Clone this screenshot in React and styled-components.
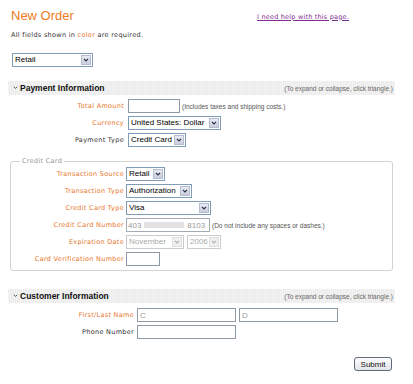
import React from "react";
import styled, { createGlobalStyle } from "styled-components";

const GlobalStyle = createGlobalStyle`
  html, body {
    margin: 0;
    padding: 0;
    background: #fff;
  }
  body {
    font-family: "DejaVu Sans", Verdana, sans-serif;
    font-size: 6.5px;
    color: #333;
  }
`;

function Chevron({ color = "#333", size = 7 }) {
  return (
    <svg width={size} height={size * 0.7} viewBox="0 0 7 5">
      <polyline
        points="1,1 3.5,3.5 6,1"
        fill="none"
        stroke={color}
        strokeWidth="1.4"
      />
    </svg>
  );
}

function Select({ value, width, disabled }) {
  return (
    <SelectBox $w={width} $disabled={disabled}>
      <SelectValue>{value}</SelectValue>
      <SelectArrow $disabled={disabled}>
        <Chevron color={disabled ? "#b0b0b0" : "#2a2f45"} size={6} />
      </SelectArrow>
    </SelectBox>
  );
}

function SectionBar({ title, top }) {
  return (
    <Bar $top={top}>
      <BarToggle>
        <Chevron color="#555" size={5} />
      </BarToggle>
      <BarTitle>{title}</BarTitle>
      <BarHint>(To expand or collapse, click triangle.)</BarHint>
    </Bar>
  );
}

function App() {
  return (
    <Page>
      <GlobalStyle />
      <TopRow>
        <Title>New Order</Title>
        <HelpLink href="#">I need help with this page.</HelpLink>
      </TopRow>
      <Note>
        All fields shown in <Req>color</Req> are required.
      </Note>
      <TopSelect>
        <Select value="Retail" width={81} />
      </TopSelect>

      <SectionBar title="Payment Information" top={14} />
      <Rows $top={4}>
        <Row>
          <Label $w={116} $gap={4} $req>Total Amount</Label>
          <Input $w={52} />
          <Hint>(Includes taxes and shipping costs.)</Hint>
        </Row>
        <Row>
          <Label $w={116} $gap={4} $req>Currency</Label>
          <Select value="United States: Dollar" width={93} />
        </Row>
        <Row>
          <Label $w={116} $gap={4}>Payment Type</Label>
          <Select value="Credit Card" width={58} />
        </Row>
      </Rows>

      <CardSet>
        <Legend>Credit Card</Legend>
        <Rows $top={2}>
          <Row>
            <Label $w={113} $gap={2} $req>Transaction Source</Label>
            <Select value="Retail" width={39} />
          </Row>
          <Row>
            <Label $w={113} $gap={2} $req>Transaction Type</Label>
            <Select value="Authorization" width={66} />
          </Row>
          <Row>
            <Label $w={113} $gap={2} $req>Credit Card Type</Label>
            <Select value="Visa" width={85} />
          </Row>
          <Row>
            <Label $w={113} $gap={2} $req>Credit Card Number</Label>
            <MaskedInput $w={84}>
              <span>403</span>
              <Mask />
              <span>8103</span>
            </MaskedInput>
            <Hint>(Do not include any spaces or dashes.)</Hint>
          </Row>
          <Row>
            <Label $w={113} $gap={2} $req>Expiration Date</Label>
            <Select value="November" width={58} disabled />
            <Spacer />
            <Select value="2006" width={34} disabled />
          </Row>
          <Row>
            <Label $w={113} $gap={2} $req>Card Verification Number</Label>
            <Input $w={34} />
          </Row>
        </Rows>
      </CardSet>

      <SectionBar title="Customer Information" top={18} />
      <Rows $top={5}>
        <Row>
          <Label $w={126} $gap={3} $req>First/Last Name</Label>
          <Input $w={99} $muted defaultValue="C" />
          <Spacer />
          <Input $w={99} $muted defaultValue="D" />
        </Row>
        <Row>
          <Label $w={126} $gap={3}>Phone Number</Label>
          <Input $w={99} />
        </Row>
      </Rows>

      <SubmitRow>
        <SubmitButton>Submit</SubmitButton>
      </SubmitRow>
    </Page>
  );
}

export default App;

const Page = styled.div`
  width: 413px;
  height: 384px;
  box-sizing: border-box;
  padding: 0 18px 0 8px;
  overflow: hidden;
`;

const TopRow = styled.div`
  display: flex;
  align-items: flex-start;
  padding: 8px 46px 0 3px;
`;

const Title = styled.h1`
  margin: 0;
  font-family: "Liberation Sans", Arial, sans-serif;
  font-weight: normal;
  font-size: 13px;
  line-height: 15px;
  color: #f07a24;
`;

const HelpLink = styled.a`
  margin: 4.5px 0 0 auto;
  line-height: 8px;
  color: #7e2f8e;
  letter-spacing: 0.2px;
  text-decoration: underline;
`;

const Note = styled.p`
  margin: 8px 0 0 3px;
  line-height: 8px;
  letter-spacing: 0.3px;
  color: #333;
`;

const Req = styled.span`
  color: #e8772e;
`;

const TopSelect = styled.div`
  margin: 14px 0 0 4px;
`;

const Bar = styled.div`
  display: flex;
  align-items: center;
  height: 14px;
  margin-top: ${(p) => p.$top}px;
  padding: 0 2px 0 5px;
  background: repeating-linear-gradient(
      90deg,
      rgba(255, 255, 255, 0.35) 0 1px,
      transparent 1px 2px
    ),
    #ececec;
`;

const BarToggle = styled.span`
  display: flex;
  width: 7px;
`;

const BarTitle = styled.span`
  font-family: "Liberation Sans", Arial, sans-serif;
  font-weight: bold;
  font-size: 8.5px;
  color: #111;
`;

const BarHint = styled.span`
  margin-left: auto;
  font-family: "Liberation Sans", Arial, sans-serif;
  font-size: 6.5px;
  color: #666;
`;

const Rows = styled.div`
  display: flex;
  flex-direction: column;
  gap: 3px;
  padding-top: ${(p) => p.$top}px;
`;

const Row = styled.div`
  display: flex;
  align-items: center;
  height: 14px;
`;

const Label = styled.label`
  flex: none;
  width: ${(p) => p.$w}px;
  margin-right: ${(p) => p.$gap}px;
  text-align: right;
  white-space: nowrap;
  letter-spacing: 0.3px;
  color: ${(p) => (p.$req ? "#e8772e" : "#333")};
`;

const Input = styled.input`
  box-sizing: border-box;
  width: ${(p) => p.$w}px;
  height: 14px;
  margin: 0;
  padding: 0 2px;
  border: 1px solid #8e9aa6;
  font-family: "Liberation Sans", Arial, sans-serif;
  font-size: 8px;
  color: ${(p) => (p.$muted ? "#9a9a9a" : "#000")};
  outline: none;
`;

const MaskedInput = styled.div`
  box-sizing: border-box;
  display: flex;
  align-items: center;
  width: ${(p) => p.$w}px;
  height: 14px;
  padding: 0 1px;
  border: 1px solid #a3acb4;
  font-family: "Liberation Sans", Arial, sans-serif;
  font-size: 8px;
  color: #9a9a9a;
`;

const Mask = styled.span`
  width: 40px;
  height: 6px;
  margin: 0 3px 0 3px;
  background: #e2e2e2;
`;

const Hint = styled.span`
  margin-left: 2px;
  font-family: "Liberation Sans", Arial, sans-serif;
  font-size: 6.5px;
  color: #555;
  white-space: nowrap;
`;

const Spacer = styled.span`
  width: 3px;
`;

const SelectBox = styled.div`
  box-sizing: border-box;
  display: inline-flex;
  align-items: stretch;
  width: ${(p) => p.$w}px;
  height: 14px;
  border: 1px solid ${(p) => (p.$disabled ? "#c9cdd2" : "#7f9db9")};
  background: #fff;
  font-family: "Liberation Sans", Arial, sans-serif;
  font-size: 8px;
  color: ${(p) => (p.$disabled ? "#a9a9a9" : "#000")};
`;

const SelectValue = styled.span`
  flex: 1;
  min-width: 0;
  padding-left: 2px;
  line-height: 12px;
  overflow: hidden;
  white-space: nowrap;
`;

const SelectArrow = styled.span`
  box-sizing: border-box;
  display: flex;
  align-items: center;
  justify-content: center;
  flex: none;
  width: 10px;
  margin: 1px;
  border: 1px solid ${(p) => (p.$disabled ? "#dedede" : "#b4bccd")};
  background: ${(p) =>
    p.$disabled ? "#f0f0f0" : "linear-gradient(#e8ebf3, #c8cedd)"};
`;

const CardSet = styled.fieldset`
  margin: 10px 2px 0 2px;
  padding: 0 0 4px 0;
  border: 1px solid #d2d2d2;
  border-radius: 3px;
`;

const Legend = styled.legend`
  margin-left: 9px;
  padding: 0 2px;
  line-height: 8px;
  letter-spacing: 0.3px;
  color: #999;
`;

const SubmitRow = styled.div`
  display: flex;
  justify-content: flex-end;
  margin-top: 18px;
  padding-right: 3px;
`;

const SubmitButton = styled.button`
  box-sizing: border-box;
  width: 38px;
  height: 14px;
  padding: 0;
  border: 1px solid #5f6a7d;
  border-radius: 3px;
  background: linear-gradient(#fdfdfd, #e3e5ea);
  font-family: "Liberation Sans", Arial, sans-serif;
  font-size: 8px;
  color: #111;
`;
